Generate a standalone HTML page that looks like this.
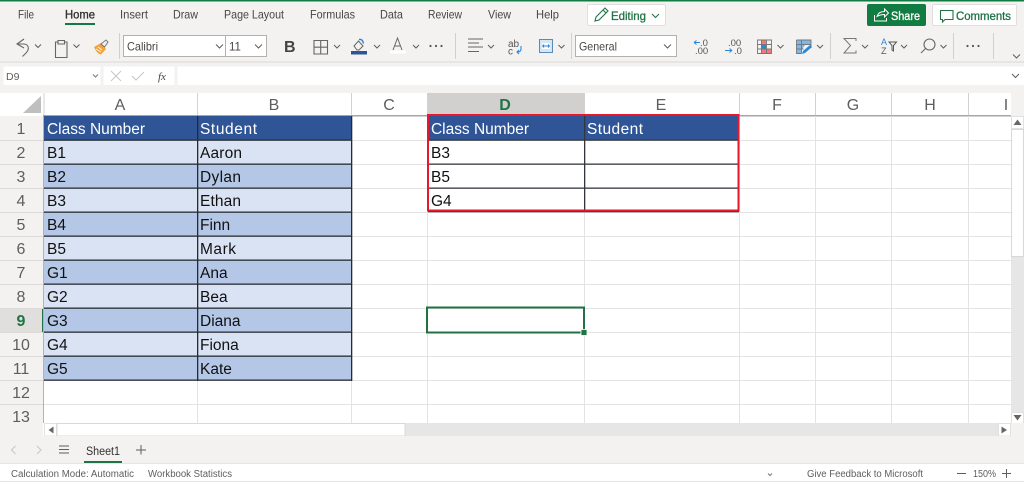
<!DOCTYPE html>
<html><head><meta charset="utf-8"><style>
html,body{margin:0;padding:0;background:#fff;width:1024px;height:482px;overflow:hidden}
svg{display:block}
text{font-family:"Liberation Sans",sans-serif}
.t{font-size:12px;fill:#484644}
.c{font-size:15.5px;fill:#111}
.w{font-size:15.5px;fill:#fff}
.h{font-size:16px;fill:#605e5c;text-anchor:middle}
.s{font-size:10px;fill:#605e5c}
.ch{fill:none;stroke:#605e5c;stroke-width:1}
.ic{fill:none;stroke:#666;stroke-width:1.1}
</style></head><body>
<svg width="1024" height="482" viewBox="0 0 1024 482" xmlns="http://www.w3.org/2000/svg">
<!-- ribbon -->
<rect width="1024" height="93" fill="#f3f2f1"/>
<rect width="1024" height="1.5" fill="#107c41"/>
<rect y="61" width="1024" height="2" fill="#e6e5e3"/>
<text class="t" x="18" y="18.500" textLength="16" lengthAdjust="spacingAndGlyphs">File</text>
<text class="t" x="65" y="18.500" textLength="30" lengthAdjust="spacingAndGlyphs" style="fill:#323130;stroke:#323130;stroke-width:.35">Home</text>
<rect x="65" y="23" width="30" height="2" fill="#107c41"/>
<text class="t" x="120" y="18.500" textLength="28" lengthAdjust="spacingAndGlyphs">Insert</text>
<text class="t" x="173" y="18.500" textLength="25" lengthAdjust="spacingAndGlyphs">Draw</text>
<text class="t" x="224" y="18.500" textLength="60" lengthAdjust="spacingAndGlyphs">Page Layout</text>
<text class="t" x="310" y="18.500" textLength="45" lengthAdjust="spacingAndGlyphs">Formulas</text>
<text class="t" x="380" y="18.500" textLength="23" lengthAdjust="spacingAndGlyphs">Data</text>
<text class="t" x="428" y="18.500" textLength="34" lengthAdjust="spacingAndGlyphs">Review</text>
<text class="t" x="488" y="18.500" textLength="23" lengthAdjust="spacingAndGlyphs">View</text>
<text class="t" x="536" y="18.500" textLength="23" lengthAdjust="spacingAndGlyphs">Help</text>
<!-- Editing -->
<rect x="587.500" y="4.500" width="78" height="21" rx="1.500" fill="#fff" stroke="#e1dfdd"/>
<path d="M595 21l1-4 9-9 3 3-9 9zM603 10l3 3" fill="none" stroke="#217346" stroke-width="1.100"/>
<text x="611" y="20" textLength="35" lengthAdjust="spacingAndGlyphs" style="font-size:12px;fill:#217346;stroke:#217346;stroke-width:.3">Editing</text>
<path d="M652 14l3.500 3.500 3.500-3.500" fill="none" stroke="#217346" stroke-width="1.100"/>
<!-- Share -->
<rect x="867" y="4" width="59" height="22" rx="2" fill="#107c41"/>
<path d="M874.500 15v6h12v-3M877 16.500c1-3.500 4-5 7.500-5V9l4 4-4 4v-2.500c-3 0-5 .5-7.500 2z" fill="none" stroke="#fff" stroke-width="1"/>
<text x="891" y="20" textLength="29" lengthAdjust="spacingAndGlyphs" style="font-size:11.500px;fill:#fff;stroke:#fff;stroke-width:.3">Share</text>
<!-- Comments -->
<rect x="932.500" y="4.500" width="84" height="21" rx="1.500" fill="#fff" stroke="#e1dfdd"/>
<path d="M940.500 10.500h12.500v9h-8l-2.500 2.500v-2.500h-2z" fill="none" stroke="#217346" stroke-width="1.100"/>
<text x="956" y="20" textLength="55" lengthAdjust="spacingAndGlyphs" style="font-size:11.500px;fill:#217346;stroke:#217346;stroke-width:.3">Comments</text>
<!-- toolbar icons -->
<path class="ic" d="M24 39l-7 5 7 4M17.500 44h6c4 0 5.500 3 4.500 6-.6 2-3 4-5.500 6.500"/>
<path class="ch" d="M35 44.500l3 3 3-3"/>
<path class="ic" d="M58 42h-2.500v15.500h11.500V42H64.500M58 40.500h6.500v3.500H58z"/>
<path class="ch" d="M73.500 44.500l3 3 3-3"/>
<path d="M94 47l7-4 5 6-5 5.500c-3-.5-5-3-7-7.500z" fill="#f2a33a"/>
<path d="M101 44l5-4 2 2-3.500 5z" fill="none" stroke="#777" stroke-width="1"/>
<path d="M96 49l5 3M98 47l4 3" stroke="#fff" stroke-width=".8"/>
<rect x="119" y="33" width="1" height="26" fill="#d2d0ce"/>
<!-- font boxes -->
<rect x="123.500" y="35.500" width="143" height="21" fill="#fff" stroke="#b3b0ad"/>
<rect x="225" y="35" width="1" height="22" fill="#b3b0ad"/>
<text x="127" y="50.500" textLength="31" lengthAdjust="spacingAndGlyphs" style="font-size:12px;fill:#484644">Calibri</text>
<path class="ch" d="M216 44.500l3.500 3.500 3.500-3.500M255 44.500l3.500 3.500 3.500-3.500"/>
<text x="229" y="50.500" style="font-size:11.500px;fill:#484644">11</text>
<text x="284" y="52" style="font-size:16px;font-weight:bold;fill:#444">B</text>
<path class="ic" d="M314 40.500h13.500v13.500H314zM320.700 40.500v13.500M314 47.200h13.500"/>
<path class="ch" d="M334 45l3 3 3-3"/>
<path d="M354 46l4.500-5 4.500 5-4 4h-2z" fill="none" stroke="#666" stroke-width="1"/>
<path d="M359 39.500c2.500-.5 4 1 4.500 4" fill="none" stroke="#2b88d8" stroke-width="1.500"/>
<rect x="351" y="51" width="16" height="3.500" fill="#2f5597"/>
<path class="ch" d="M374 45l3 3 3-3"/>
<path d="M393 50l4.500-12 4.500 12M394.500 46h6" fill="none" stroke="#666" stroke-width="1"/>
<rect x="390" y="50.500" width="16" height="3" fill="#fff"/>
<path class="ch" d="M413 45l3 3 3-3"/>
<g fill="#555"><circle cx="430.500" cy="46" r="1.100"/><circle cx="436" cy="46" r="1.100"/><circle cx="441.500" cy="46" r="1.100"/></g>
<rect x="455" y="33" width="1" height="26" fill="#d2d0ce"/>
<path class="ic" d="M468 39h15M468 43h11M468 47h15M468 51.500h11"/>
<path class="ch" d="M488 45l3 3 3-3"/>
<text x="508" y="47" style="font-size:10px;fill:#555">ab</text>
<text x="508" y="54.500" style="font-size:10px;fill:#555">c</text>
<path d="M521 46v3c0 2-1.500 3-3.500 3M519 50l-2 2 2 2" fill="none" stroke="#2b88d8" stroke-width="1.100"/>
<rect x="539.500" y="39.500" width="13" height="13" fill="#d5e6f5" stroke="#5a8ab5"/>
<rect x="542" y="43" width="8" height="6" fill="#fff"/>
<path d="M542.500 46h7M542.500 46l1.500-1.500M542.500 46l1.500 1.500M549.500 46l-1.500-1.500M549.500 46l-1.500 1.500" fill="none" stroke="#2b88d8"/>
<path class="ch" d="M558.500 45l3 3 3-3"/>
<rect x="571" y="33" width="1" height="26" fill="#d2d0ce"/>
<rect x="575.500" y="35.500" width="101" height="21" fill="#fff" stroke="#b3b0ad"/>
<text x="579" y="50.500" textLength="38" lengthAdjust="spacingAndGlyphs" style="font-size:12px;fill:#484644">General</text>
<path class="ch" d="M664 44.500l3.500 3.500 3.500-3.500"/>
<!-- decimals -->
<text x="700" y="46" style="font-size:9.500px;fill:#555">.0</text>
<path d="M694 42.500h6M694 42.500l2.500-2M694 42.500l2.500 2" fill="none" stroke="#2b88d8"/>
<text x="695" y="54" style="font-size:9.500px;fill:#555">.00</text>
<text x="728" y="46" style="font-size:9.500px;fill:#555">.00</text>
<path d="M725 50.500h7M732 50.500l-2.500-2M732 50.500l-2.500 2" fill="none" stroke="#2b88d8"/>
<text x="734" y="54" style="font-size:9.500px;fill:#555">.0</text>
<rect x="761" y="40" width="5" height="5" fill="#f07a7a"/><rect x="761" y="45" width="5" height="4" fill="#2b88d8"/><rect x="761" y="49" width="10" height="4" fill="#f07a7a"/>
<path d="M757.500 40h14v13.500h-14zM757.500 44.500h14M757.500 49h14M761.500 40v13.500M766.500 40v13.500" fill="none" stroke="#777" stroke-width=".9"/>
<path class="ch" d="M777.500 45l3 3 3-3"/>
<path d="M797 40h14v5h-6l-4 6v2h-4z" fill="#7db8e8"/>
<path d="M796.500 40h14.500v8M796.500 40v13.500h5M796.500 44.500h14.500M796.500 49h7M801.500 40v13.500" fill="none" stroke="#777" stroke-width=".9"/>
<path d="M802 54l1-3 7-6 2 2-7 6z" fill="#2b88d8"/>
<path class="ch" d="M817 45l3 3 3-3"/>
<rect x="830" y="33" width="1" height="26" fill="#d2d0ce"/>
<path d="M856 41v-2.500h-12l6.500 7-6.500 7.500h12v-2.500" fill="none" stroke="#777" stroke-width="1"/>
<path class="ch" d="M862 45l3 3 3-3"/>
<text x="881" y="45" style="font-size:9px;fill:#2b88d8">A</text>
<text x="881" y="54" style="font-size:9px;fill:#555">Z</text>
<path d="M889 42h7.500l-3 3.500V51l-1.500-1v-4.500z" fill="none" stroke="#555" stroke-width="1"/>
<path class="ch" d="M901 45l3 3 3-3"/>
<circle cx="929.500" cy="44.500" r="5.500" class="ic"/>
<path class="ic" d="M925.500 48.500l-4.500 4.500"/>
<path class="ch" d="M940.500 45l3 3 3-3"/>
<rect x="953" y="33" width="1" height="26" fill="#d2d0ce"/>
<g fill="#555"><circle cx="967.500" cy="46" r="1.100"/><circle cx="973" cy="46" r="1.100"/><circle cx="978.500" cy="46" r="1.100"/></g>
<rect x="993" y="33" width="1" height="26" fill="#d2d0ce"/>
<path class="ch" d="M1013 54.500l3.500 3.500 3.500-3.500"/>
<!-- formula bar -->
<rect x="3.500" y="66.500" width="97" height="18.500" fill="#fff"/>
<text x="6" y="80" style="font-size:10.500px;fill:#605e5c">D9</text>
<path d="M93 74.500l2.500 2.500 2.500-2.500" fill="none" stroke="#777"/>
<rect x="103.500" y="66.500" width="71" height="18.500" fill="#fff"/>
<path d="M111 71l10 10M121 71l-10 10M132 76l4 4 8-8" fill="none" stroke="#c8c6c4" stroke-width="1"/>
<text x="158" y="80" style="font-size:11px;font-style:italic;font-family:'Liberation Serif',serif;fill:#444">fx</text>
<rect x="177.500" y="66.500" width="846.500" height="18.500" fill="#fff"/>
<path class="ch" d="M1012 74l3.500 3.500 3.500-3.500"/>
<!-- headers -->
<rect x="427" y="93" width="157" height="23" fill="#d2d0ce"/>
<path d="M41 96v17H23z" fill="#bfbfbf"/>
<g fill="#d4d2d0">
<rect x="43.500" y="93" width="1" height="23"/><rect x="197" y="93" width="1" height="23"/><rect x="351" y="93" width="1" height="23"/><rect x="427" y="93" width="1" height="23"/><rect x="584" y="93" width="1" height="23"/><rect x="739" y="93" width="1" height="23"/><rect x="815" y="93" width="1" height="23"/><rect x="891" y="93" width="1" height="23"/><rect x="968" y="93" width="1" height="23"/>
</g>
<rect x="0" y="116" width="44" height="307" fill="#f3f2f1"/>
<rect x="0" y="308" width="44" height="24" fill="#e1dfdd"/>
<rect x="42" y="308" width="2" height="24" fill="#217346"/>
<g fill="#dcdad8"><rect y="140" width="44" height="1"/><rect y="164" width="44" height="1"/><rect y="188" width="44" height="1"/><rect y="212" width="44" height="1"/><rect y="236" width="44" height="1"/><rect y="260" width="44" height="1"/><rect y="284" width="44" height="1"/><rect y="308" width="44" height="1"/><rect y="332" width="44" height="1"/><rect y="356" width="44" height="1"/><rect y="380" width="44" height="1"/><rect y="404" width="44" height="1"/></g>
<rect x="44" y="116" width="967" height="307" fill="#fff"/>
<rect x="43" y="115" width="968" height="1.500" fill="#a6a6a6"/>
<rect x="43" y="116" width="1" height="307" fill="#b5b3b1"/>
<!-- grid -->
<g fill="#e3e3e3">
<rect x="197" y="116" width="1" height="307"/><rect x="351" y="116" width="1" height="307"/><rect x="427" y="116" width="1" height="307"/><rect x="584" y="116" width="1" height="307"/><rect x="739" y="116" width="1" height="307"/><rect x="815" y="116" width="1" height="307"/><rect x="891" y="116" width="1" height="307"/><rect x="968" y="116" width="1" height="307"/>
<rect x="44" y="140" width="967" height="1"/><rect x="44" y="164" width="967" height="1"/><rect x="44" y="188" width="967" height="1"/><rect x="44" y="212" width="967" height="1"/><rect x="44" y="236" width="967" height="1"/><rect x="44" y="260" width="967" height="1"/><rect x="44" y="284" width="967" height="1"/><rect x="44" y="308" width="967" height="1"/><rect x="44" y="332" width="967" height="1"/><rect x="44" y="356" width="967" height="1"/><rect x="44" y="380" width="967" height="1"/><rect x="44" y="404" width="967" height="1"/>
</g>
<text class="h" x="120" y="110">A</text><text class="h" x="274" y="110">B</text><text class="h" x="389" y="110">C</text>
<text class="h" x="505" y="110" style="fill:#217346;font-weight:bold">D</text>
<text class="h" x="661" y="110">E</text><text class="h" x="777" y="110">F</text><text class="h" x="853" y="110">G</text><text class="h" x="930" y="110">H</text><text class="h" x="1006" y="110">I</text>
<text class="h" x="21" y="134">1</text><text class="h" x="21" y="158">2</text><text class="h" x="21" y="182">3</text><text class="h" x="21" y="206">4</text><text class="h" x="21" y="230">5</text><text class="h" x="21" y="254">6</text><text class="h" x="21" y="278">7</text><text class="h" x="21" y="302">8</text>
<text class="h" x="21" y="326" style="fill:#217346;font-weight:bold">9</text>
<text class="h" x="21" y="350">10</text><text class="h" x="21" y="374">11</text><text class="h" x="21" y="398">12</text><text class="h" x="21" y="422">13</text>
<!-- table 1 -->
<rect x="44" y="116" width="307" height="24" fill="#2f5597"/>
<rect x="44" y="140" width="307" height="24" fill="#dae3f3"/>
<rect x="44" y="164" width="307" height="24" fill="#b4c7e7"/>
<rect x="44" y="188" width="307" height="24" fill="#dae3f3"/>
<rect x="44" y="212" width="307" height="24" fill="#b4c7e7"/>
<rect x="44" y="236" width="307" height="24" fill="#dae3f3"/>
<rect x="44" y="260" width="307" height="24" fill="#b4c7e7"/>
<rect x="44" y="284" width="307" height="24" fill="#dae3f3"/>
<rect x="44" y="308" width="307" height="24" fill="#b4c7e7"/>
<rect x="44" y="332" width="307" height="24" fill="#dae3f3"/>
<rect x="44" y="356" width="307" height="24" fill="#b4c7e7"/>
<g fill="#262b33">
<rect x="197" y="116" width="1.300" height="265"/><rect x="351" y="116" width="1.300" height="265"/>
<rect x="44" y="139.500" width="308" height="1.300"/><rect x="44" y="163.500" width="308" height="1.300"/><rect x="44" y="187.500" width="308" height="1.300"/><rect x="44" y="211.500" width="308" height="1.300"/><rect x="44" y="235.500" width="308" height="1.300"/><rect x="44" y="259.500" width="308" height="1.300"/><rect x="44" y="283.500" width="308" height="1.300"/><rect x="44" y="307.500" width="308" height="1.300"/><rect x="44" y="331.500" width="308" height="1.300"/><rect x="44" y="355.500" width="308" height="1.300"/><rect x="44" y="379.500" width="308" height="1.300"/>
</g>
<text class="w" x="47" y="134" textLength="98">Class Number</text>
<text class="w" x="200" y="134" textLength="57">Student</text>
<text class="c" x="47" y="158">B1</text><text class="c" x="200" y="158" textLength="42">Aaron</text>
<text class="c" x="47" y="182">B2</text><text class="c" x="200" y="182" textLength="41">Dylan</text>
<text class="c" x="47" y="206">B3</text><text class="c" x="200" y="206" textLength="41">Ethan</text>
<text class="c" x="47" y="230">B4</text><text class="c" x="200" y="230">Finn</text>
<text class="c" x="47" y="254">B5</text><text class="c" x="200" y="254" textLength="36">Mark</text>
<text class="c" x="47" y="278">G1</text><text class="c" x="200" y="278">Ana</text>
<text class="c" x="47" y="302">G2</text><text class="c" x="200" y="302">Bea</text>
<text class="c" x="47" y="326">G3</text><text class="c" x="200" y="326">Diana</text>
<text class="c" x="47" y="350">G4</text><text class="c" x="200" y="350">Fiona</text>
<text class="c" x="47" y="374">G5</text><text class="c" x="200" y="374">Kate</text>
<!-- table 2 -->
<rect x="428" y="116" width="311" height="24" fill="#2f5597"/>
<rect x="428" y="140" width="311" height="71" fill="#fff"/>
<g fill="#33373d">
<rect x="584" y="116" width="1.300" height="95"/>
<rect x="428" y="139.500" width="311" height="1.300"/><rect x="428" y="163.500" width="311" height="1.300"/><rect x="428" y="187.500" width="311" height="1.300"/><rect x="428" y="211" width="311" height="1.300"/>
</g>
<rect x="428" y="115" width="310.500" height="95.500" fill="none" stroke="#e8172c" stroke-width="2"/>
<text class="w" x="431" y="134" textLength="98">Class Number</text>
<text class="w" x="587" y="134" textLength="56">Student</text>
<text class="c" x="431" y="158">B3</text>
<text class="c" x="431" y="182">B5</text>
<text class="c" x="431" y="206">G4</text>
<!-- selection -->
<rect x="427" y="307.500" width="157" height="25" fill="none" stroke="#217346" stroke-width="2"/>
<rect x="581" y="329.500" width="6" height="6" fill="#217346" stroke="#fff" stroke-width=".8"/>
<!-- v scrollbar -->
<rect x="1011" y="93" width="13" height="23" fill="#f3f2f1"/>
<rect x="1011" y="116" width="13" height="307" fill="#e6e6e6"/>
<rect x="1011.500" y="116.500" width="12" height="12" fill="#fff" stroke="#e1e1e1"/>
<path d="M1013.500 125l4-5.500 4 5.500z" fill="#666"/>
<rect x="1011.500" y="129.500" width="12" height="127" fill="#fff" stroke="#d8d8d8"/>
<rect x="1011.500" y="412.500" width="12" height="11" fill="#fff" stroke="#e1e1e1"/>
<path d="M1013.500 415l4 5.500 4-5.500z" fill="#666"/>
<!-- h scrollbar -->
<rect x="44" y="423" width="967" height="13" fill="#e6e6e6"/>
<rect x="44.500" y="423.500" width="12" height="12.500" fill="#fff" stroke="#e1e1e1"/>
<path d="M53.500 426.500l-5 3.500 5 3.500z" fill="#666"/>
<rect x="57" y="423.500" width="348" height="12.500" fill="#fff" stroke="#d8d8d8"/>
<rect x="998.500" y="423.500" width="12" height="12.500" fill="#fff" stroke="#e1e1e1"/>
<path d="M1001.500 426.500l5.500 3.500-5.500 3.500z" fill="#666"/>
<rect x="0" y="423" width="43" height="13" fill="#f3f2f1"/>
<rect x="1011" y="423" width="13" height="13" fill="#f3f2f1"/>
<!-- sheet tabs -->
<rect y="436" width="1024" height="27" fill="#f3f2f1"/>
<path d="M15.500 446l-4 4 4 4M37 446l4 4-4 4" fill="none" stroke="#c8c6c4" stroke-width="1"/>
<path d="M59 446h10M59 449.500h10M59 453h10" stroke="#605e5c" stroke-width="1"/>
<text x="86" y="455" textLength="34" lengthAdjust="spacingAndGlyphs" style="font-size:11.500px;fill:#323130">Sheet1</text>
<rect x="84" y="461" width="38" height="2" fill="#217346"/>
<path d="M141 445v9.500M136 450h10" stroke="#605e5c" stroke-width="1"/>
<!-- status -->
<rect y="463" width="1024" height="19" fill="#fff"/>
<rect y="463" width="1024" height="1" fill="#e6e5e3"/>
<rect y="481" width="1024" height="1" fill="#e6e5e3"/>
<text class="s" x="11" y="477" textLength="123" lengthAdjust="spacingAndGlyphs">Calculation Mode: Automatic</text>
<text class="s" x="148" y="477" textLength="84" lengthAdjust="spacingAndGlyphs">Workbook Statistics</text>
<path d="M768 473.500l2 2 2-2" fill="none" stroke="#777"/>
<text class="s" x="807" y="477" textLength="116" lengthAdjust="spacingAndGlyphs">Give Feedback to Microsoft</text>
<path d="M957 473.500h9M1002 473.500h9M1006.500 469v9" stroke="#605e5c" stroke-width="1"/>
<text class="s" x="973" y="477" textLength="23" lengthAdjust="spacingAndGlyphs">150%</text>
</svg>
</body></html>
